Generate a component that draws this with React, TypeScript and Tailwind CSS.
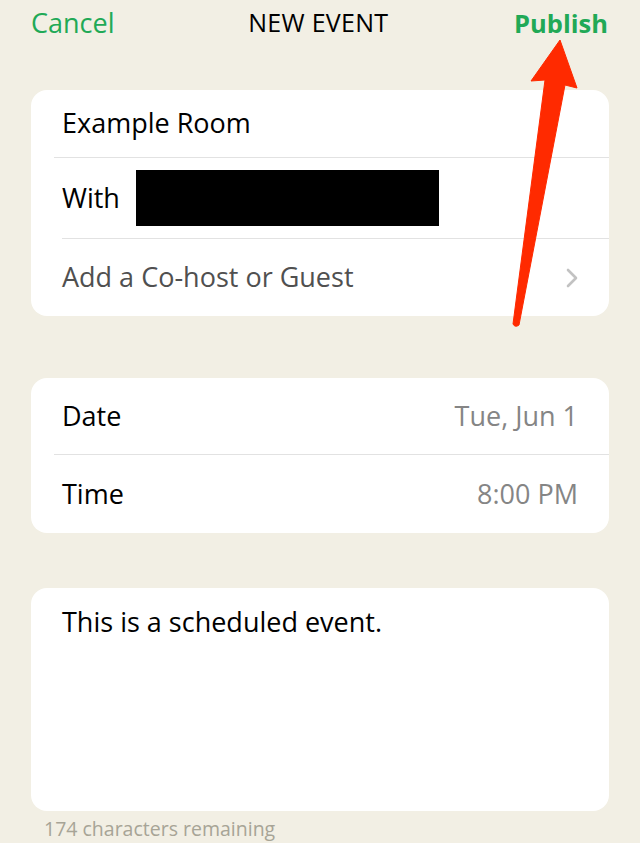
import React from "react";

const font = "font-['Open_Sans',sans-serif]";

export default function App() {
  return (
    <div className={`relative w-[640px] h-[843px] overflow-hidden bg-[#f2efe4] ${font}`}>
      {/* Header */}
      <div className="flex items-center justify-between h-[46px] pl-[31px] pr-[32px]">
        <span className="text-[27px] text-[#21a956]">Cancel</span>
        <span className="text-[25px] text-black ml-[8px] tracking-[0.3px]">NEW EVENT</span>
        <span className="text-[25.5px] font-bold text-[#21a956]">Publish</span>
      </div>

      <div className="flex flex-col px-[31px] pt-[44px]">
        {/* Card 1 */}
        <div className="bg-white rounded-[16px] flex flex-col">
          <div className="h-[67px] flex items-center pl-[31px] text-[27px] text-black">Example Room</div>
          <div className="h-px bg-[#e2e2e2] ml-[23px]" />
          <div className="h-[80px] flex items-center pl-[31px] text-[27px] text-black gap-[16px]">
            <span>With</span>
            <div className="w-[303px] h-[56px] bg-black" />
          </div>
          <div className="h-px bg-[#e2e2e2] ml-[31px]" />
          <div className="h-[77px] flex items-center justify-between pl-[31px] pr-[31px] text-[27px] text-[#505050]">
            <span>Add a Co-host or Guest</span>
            <svg width="12" height="20" viewBox="0 0 12 20" fill="none">
              <path d="M2 2 L10 10 L2 18" stroke="#c2c2c2" strokeWidth="2.6" strokeLinecap="round" strokeLinejoin="round" />
            </svg>
          </div>
        </div>

        {/* Card 2 */}
        <div className="bg-white rounded-[16px] flex flex-col mt-[62px]">
          <div className="h-[76px] flex items-center justify-between pl-[31px] pr-[31px] text-[27px]">
            <span className="text-black">Date</span>
            <span className="text-[#858585]">Tue, Jun 1</span>
          </div>
          <div className="h-px bg-[#e2e2e2] ml-[23px]" />
          <div className="h-[78px] flex items-center justify-between pl-[31px] pr-[31px] text-[27px]">
            <span className="text-black">Time</span>
            <span className="text-[#858585]">8:00 PM</span>
          </div>
        </div>

        {/* Card 3 */}
        <div className="bg-white rounded-[16px] mt-[55px] h-[223px] pl-[31px] pt-[14px] text-[27px] text-black">
          This is a scheduled event.
        </div>
        <div className="pl-[13px] pt-[3px] text-[19.5px] text-[#a7a496]">174 characters remaining</div>
      </div>

      {/* Annotation arrow */}
      <svg className="absolute left-0 top-0 pointer-events-none" width="640" height="843" viewBox="0 0 640 843">
        <path
          d="M560 40 L531 81 L545 80 L513 324 Q515 328 519 325 L565 85 L577 88 Z"
          fill="#ff2a00"
          stroke="#ff2a00"
          strokeWidth="1"
          strokeLinejoin="round"
        />
      </svg>
    </div>
  );
}
